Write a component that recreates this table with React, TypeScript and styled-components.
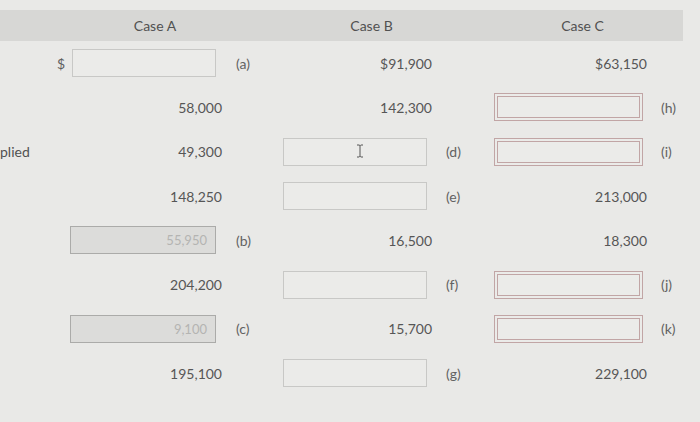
import styled, { createGlobalStyle } from "styled-components";

const GlobalStyle = createGlobalStyle`
  html, body {
    margin: 0;
    padding: 0;
    background: #e9e9e7;
    font-family: Lato, "Open Sans", sans-serif;
  }
`;

const COLS = "56px 14px 152px 61px 149px 62px 153px 36px";

type Field = "plain" | "error" | "filled";

type Cell =
  | { kind: "num"; value: string }
  | { kind: "input"; field: Field; value?: string; cursor?: boolean; tag: string };

interface IRow {
  label?: string;
  dollar?: boolean;
  cells: [Cell, Cell, Cell];
}

const rows: IRow[] = [
  {
    dollar: true,
    cells: [
      { kind: "input", field: "plain", tag: "(a)" },
      { kind: "num", value: "$91,900" },
      { kind: "num", value: "$63,150" },
    ],
  },
  {
    cells: [
      { kind: "num", value: "58,000" },
      { kind: "num", value: "142,300" },
      { kind: "input", field: "error", tag: "(h)" },
    ],
  },
  {
    label: "plied",
    cells: [
      { kind: "num", value: "49,300" },
      { kind: "input", field: "plain", cursor: true, tag: "(d)" },
      { kind: "input", field: "error", tag: "(i)" },
    ],
  },
  {
    cells: [
      { kind: "num", value: "148,250" },
      { kind: "input", field: "plain", tag: "(e)" },
      { kind: "num", value: "213,000" },
    ],
  },
  {
    cells: [
      { kind: "input", field: "filled", value: "55,950", tag: "(b)" },
      { kind: "num", value: "16,500" },
      { kind: "num", value: "18,300" },
    ],
  },
  {
    cells: [
      { kind: "num", value: "204,200" },
      { kind: "input", field: "plain", tag: "(f)" },
      { kind: "input", field: "error", tag: "(j)" },
    ],
  },
  {
    cells: [
      { kind: "input", field: "filled", value: "9,100", tag: "(c)" },
      { kind: "num", value: "15,700" },
      { kind: "input", field: "error", tag: "(k)" },
    ],
  },
  {
    cells: [
      { kind: "num", value: "195,100" },
      { kind: "input", field: "plain", tag: "(g)" },
      { kind: "num", value: "229,100" },
    ],
  },
];

const Page = styled.div`
  width: 683px;
  padding-top: 10px;
  color: #555;
  font-size: 14px;
`;

const HeaderBar = styled.div`
  display: grid;
  grid-template-columns: 70px 152px 61px 149px 62px 153px 36px;
  height: 31px;
  align-items: center;
  background: #d7d7d5;
`;

const HeaderCell = styled.div<{ $col: number; $shift: number }>`
  grid-column: ${(p) => p.$col};
  text-align: center;
  padding-left: ${(p) => p.$shift}px;
  color: #515151;
`;

const Table = styled.div`
  display: grid;
  grid-template-columns: ${COLS};
  grid-auto-rows: 44.3px;
  align-items: center;
`;

const Label = styled.div`
  white-space: nowrap;
  overflow: hidden;
  color: #515151;
`;

const Dollar = styled.div`
  padding-left: 1px;
  color: #5e5e5e;
`;

const Num = styled.div`
  text-align: right;
  color: #565656;
`;

const InputBox = styled.div<{ $field: Field; $width: number; $inset: number }>`
  position: relative;
  box-sizing: border-box;
  width: ${(p) => p.$width}px;
  margin-left: ${(p) => p.$inset}px;
  height: 28px;
  padding-right: 8px;
  display: flex;
  align-items: center;
  justify-content: flex-end;
  font-size: 13px;
  color: #b4b4b2;
  background: ${(p) => (p.$field === "filled" ? "#dcdcda" : "#ebebe9")};
  border: ${(p) =>
    p.$field === "error"
      ? "4px double #c1a5a5"
      : p.$field === "filled"
      ? "1px solid #ababa9"
      : "1px solid #c8c8c6"};
`;

const Cursor = styled.svg`
  position: absolute;
  left: 72px;
  top: 5px;
`;

const Tag = styled.div`
  padding-left: 14px;
  color: #626262;
  font-size: 14px;
`;

const widths = [146, 144, 149];

function renderCell(cell: Cell, i: number, key: string) {
  if (cell.kind === "num") {
    return [<Num key={key}>{cell.value}</Num>, <div key={key + "t"} />];
  }
  // the plain (a) box sits a touch to the right of the grey ones
  const inset = i === 0 && cell.field === "plain" ? 2 : 0;
  return [
    <div key={key}>
      <InputBox $field={cell.field} $width={widths[i] - inset} $inset={inset}>
        {cell.value}
        {cell.cursor && (
          <Cursor width="8" height="14" viewBox="0 0 8 14">
            <path
              d="M1 1h2.2l0.8 0.8 0.8-0.8H7M4 1.8v10.4M1 13h2.2l0.8-0.8 0.8 0.8H7"
              fill="none"
              stroke="#555"
              strokeWidth="1"
            />
          </Cursor>
        )}
      </InputBox>
    </div>,
    <Tag key={key + "t"}>{cell.tag}</Tag>,
  ];
}

function App() {
  return (
    <>
      <GlobalStyle />
      <Page>
        <HeaderBar>
          <HeaderCell $col={2} $shift={18}>
            Case A
          </HeaderCell>
          <HeaderCell $col={4} $shift={28}>
            Case B
          </HeaderCell>
          <HeaderCell $col={6} $shift={24}>
            Case C
          </HeaderCell>
        </HeaderBar>
        <Table>
          {rows.map((row, r) => [
            <Label key={`l${r}`}>{row.label}</Label>,
            <Dollar key={`d${r}`}>{row.dollar ? "$" : ""}</Dollar>,
            ...row.cells.flatMap((c, i) => renderCell(c, i, `c${r}-${i}`)),
          ])}
        </Table>
      </Page>
    </>
  );
}

export default App;
